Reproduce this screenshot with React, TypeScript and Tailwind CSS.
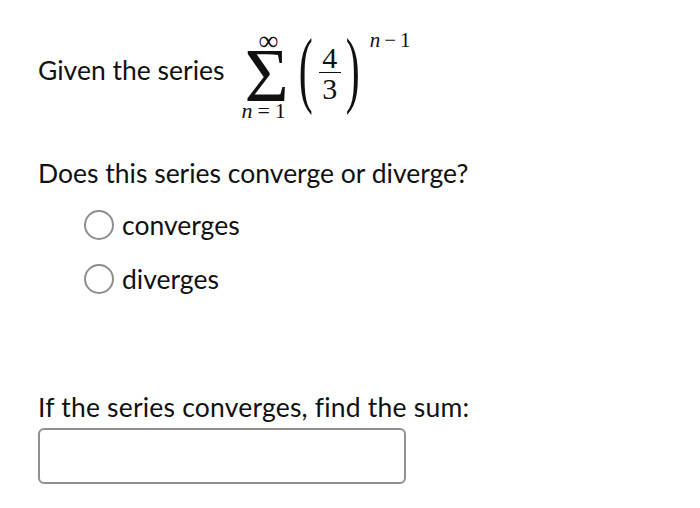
import React from 'react';

const serif = { fontFamily: '"Liberation Serif", "DejaVu Serif", serif' };

function Radio({ label }: { label: string }) {
  return (
    <label className="flex items-center gap-[8px] h-[30px]">
      <span className="w-[30px] h-[30px] rounded-full border-[2.5px] border-[#8e8e8e] bg-white shrink-0" />
      <span className="text-[26.5px] leading-[32px] text-[#111]">{label}</span>
    </label>
  );
}

export default function App() {
  return (
    <div
      className="w-[700px] h-[508px] bg-white text-[#111] pl-[38px] pt-[30px] [font-variant-ligatures:none]"
      style={{ fontFamily: 'Lato, "Open Sans", sans-serif' }}
    >
      {/* series */}
      <div className="flex items-center h-[90px]">
        <span className="text-[26.5px] leading-[32px] mb-[10px]">Given the series</span>
        <div className="flex items-center h-[90px]" style={serif}>
          {/* sum */}
          <div className="flex flex-col items-center ml-[14px] mt-[5px]">
            <span className="text-[28px] leading-[16px] h-[16px] ml-[10px] -mt-[1px]">∞</span>
            <span className="text-[76px] leading-[50px] h-[50px] ml-[6px] mt-[1px]">Σ</span>
            <span className="text-[22px] leading-[20px] h-[20px] flex mt-[1px]">
              <i>n</i>
              <span className="mx-[5px]">=</span>
              <span>1</span>
            </span>
          </div>
          {/* (4/3) */}
          <span className="text-[42px] leading-[40px] scale-y-[2] ml-[10px] mb-[12px]">(</span>
          <div className="flex flex-col items-center ml-[6px] mb-[3px] text-[30px] leading-[24px]">
            <span className="h-[24px]">4</span>
            <span className="w-[22px] h-[1.5px] bg-[#111] mt-[2px]" />
            <span className="h-[24px] mt-[4px]">3</span>
          </div>
          <span className="text-[42px] leading-[40px] scale-y-[2] ml-[5px] mb-[12px]">)</span>
          {/* exponent */}
          <span className="self-start flex text-[21px] leading-[20px] ml-[10px]">
            <i>n</i>
            <span className="mx-[4px]">−</span>
            <span>1</span>
          </span>
        </div>
      </div>

      <p className="text-[26.5px] leading-[32px] mt-[37px]">Does this series converge or diverge?</p>

      <div className="flex flex-col gap-[24px] ml-[46px] mt-[21px]">
        <Radio label="converges" />
        <Radio label="diverges" />
      </div>

      <p className="text-[26.5px] leading-[32px] mt-[97px] tracking-[0.2px]">If the series converges, find the sum:</p>
      <input
        type="text"
        className="block mt-[5px] w-[368px] h-[56px] border-2 border-[#909090] rounded-[6px] bg-white outline-none"
      />
    </div>
  );
}
